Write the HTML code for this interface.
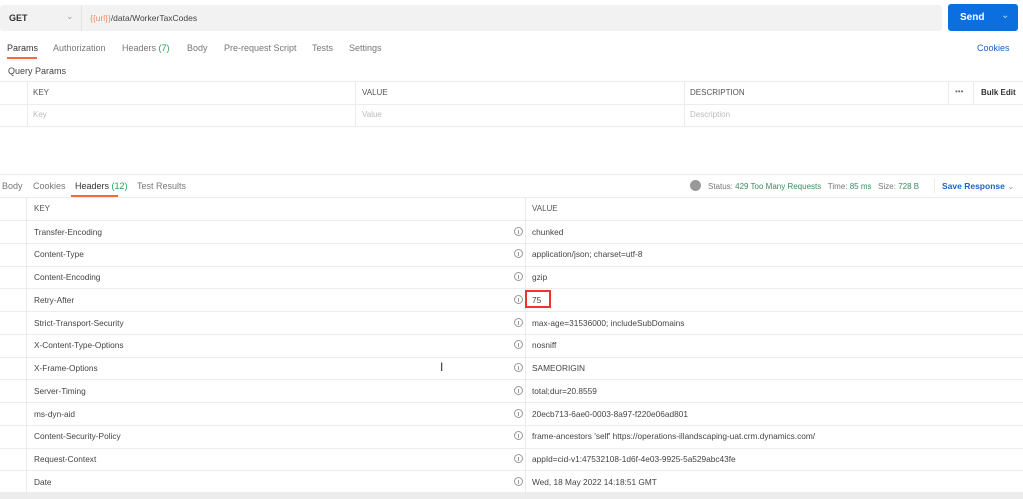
<!DOCTYPE html>
<html><head><meta charset="utf-8"><style>
*{margin:0;padding:0;box-sizing:border-box}
body{width:1023px;height:499px;overflow:hidden;background:#fff;font-family:"Liberation Sans",sans-serif;font-size:9px;color:#333;position:relative}
.a{position:absolute;white-space:nowrap}
.hl{position:absolute;height:1px;background:#ececec}
.vl{position:absolute;width:1px;background:#ececec}
.g{color:#777}
.i{position:absolute;width:9px;height:9px;border:1px solid #999;border-radius:50%}
.i:after{content:"";position:absolute;left:3px;top:2px;width:1px;height:4px;background:#999}
</style></head><body>
<div class="a" style="left:0;top:5px;width:942px;height:26px;background:#f2f2f2;border-radius:3px"></div>
<div class="vl" style="left:81px;top:5px;height:26px;background:#e2e2e2"></div>
<div class="a" style="left:9px;top:13px;font-weight:bold;font-size:9px;color:#333">GET</div>
<div class="a" style="left:66px;top:11px;color:#999;font-size:9px">⌄</div>
<div class="a" style="left:90px;top:13px;font-size:8.5px;color:#444"><span style="color:#f08a60">{{url}}</span>/data/WorkerTaxCodes</div>
<div class="a" style="left:948px;top:4px;width:70px;height:27px;background:#0c6fe0;border-radius:3px"></div>
<div class="a" style="left:960px;top:12px;color:#fff;font-weight:bold;font-size:10px">Send</div>
<div class="a" style="left:1001px;top:10px;color:#b8d6ff;font-size:10px">⌄</div>
<div class="a g" style="left:7px;top:43px;color:#333">Params</div>
<div class="a" style="left:7px;top:57px;width:30px;height:2px;background:#f26b3a"></div>
<div class="a g" style="left:53px;top:43px">Authorization</div>
<div class="a g" style="left:122px;top:43px">Headers <span style="color:#2a9d5a">(7)</span></div>
<div class="a g" style="left:187px;top:43px">Body</div>
<div class="a g" style="left:224px;top:43px">Pre-request Script</div>
<div class="a g" style="left:312px;top:43px">Tests</div>
<div class="a g" style="left:349px;top:43px">Settings</div>
<div class="a" style="left:977px;top:43px;color:#1a63c7">Cookies</div>
<div class="a" style="left:8px;top:66px;color:#444">Query Params</div>
<div class="hl" style="left:0;top:81px;width:1023px"></div>
<div class="hl" style="left:0;top:104px;width:1023px"></div>
<div class="hl" style="left:0;top:126px;width:1023px"></div>
<div class="vl" style="left:27px;top:81px;height:45px"></div>
<div class="vl" style="left:355px;top:81px;height:45px"></div>
<div class="vl" style="left:684px;top:81px;height:45px"></div>
<div class="vl" style="left:948px;top:81px;height:23px"></div>
<div class="vl" style="left:973px;top:81px;height:23px"></div>
<div class="a" style="left:33px;top:88px;color:#555;font-size:8px">KEY</div>
<div class="a" style="left:362px;top:88px;color:#555;font-size:8px">VALUE</div>
<div class="a" style="left:690px;top:88px;color:#555;font-size:8px">DESCRIPTION</div>
<div class="a" style="left:955px;top:87px;color:#777;font-size:8px">•••</div>
<div class="a" style="left:981px;top:88px;color:#333;font-weight:bold;font-size:8px">Bulk Edit</div>
<div class="a" style="left:33px;top:110px;color:#bbb;font-size:8px">Key</div>
<div class="a" style="left:362px;top:110px;color:#bbb;font-size:8px">Value</div>
<div class="a" style="left:690px;top:110px;color:#bbb;font-size:8px">Description</div>
<div class="hl" style="left:0;top:174px;width:1023px"></div>
<div class="a g" style="left:2px;top:181px">Body</div>
<div class="a g" style="left:33px;top:181px">Cookies</div>
<div class="a g" style="left:75px;top:181px;color:#333">Headers <span style="color:#2a9d5a">(12)</span></div>
<div class="a" style="left:71px;top:195px;width:47px;height:2px;background:#f26b3a"></div>
<div class="a g" style="left:137px;top:181px">Test Results</div>
<div class="a" style="left:690px;top:180px;width:11px;height:11px;border-radius:50%;background:#999"></div>
<div class="a g" style="left:708px;top:182px;font-size:8px">Status: <span style="color:#3a8a60">429 Too Many Requests</span> &nbsp; Time: <span style="color:#3a8a60">85 ms</span> &nbsp; Size: <span style="color:#3a8a60">728 B</span></div>
<div class="vl" style="left:934px;top:178px;height:15px"></div>
<div class="a" style="left:942px;top:181px;color:#1a63c7;font-weight:bold;font-size:8.5px">Save Response <span style="color:#999;font-weight:normal">⌄</span></div>
<div class="hl" style="left:0;top:197px;width:1023px"></div>
<div class="a" style="left:34px;top:204px;color:#555;font-size:8px">KEY</div>
<div class="a" style="left:532px;top:204px;color:#555;font-size:8px">VALUE</div>
<div class="vl" style="left:26px;top:197px;height:295px"></div>
<div class="vl" style="left:525px;top:197px;height:295px"></div>
<div id="rows"></div>
<div class="a" style="left:0;top:492px;width:1023px;height:7px;background:#ececec"></div>
<div class="a" style="left:525px;top:290px;width:26px;height:18px;border:2px solid #e33"></div>
<div class="a" style="left:440px;top:360px;font-size:12px;color:#333">I</div>
<script>
var d=[["Transfer-Encoding","chunked"],["Content-Type","application/json; charset=utf-8"],["Content-Encoding","gzip"],["Retry-After","75"],["Strict-Transport-Security","max-age=31536000; includeSubDomains"],["X-Content-Type-Options","nosniff"],["X-Frame-Options","SAMEORIGIN"],["Server-Timing","total;dur=20.8559"],["ms-dyn-aid","20ecb713-6ae0-0003-8a97-f220e06ad801"],["Content-Security-Policy","frame-ancestors 'self' https://operations-illandscaping-uat.crm.dynamics.com/"],["Request-Context","appId=cid-v1:47532108-1d6f-4e03-9925-5a529abc43fe"],["Date","Wed, 18 May 2022 14:18:51 GMT"]];
var h="";for(var k=0;k<d.length;k++){var y=220+k*22.75;
h+='<div class="hl" style="left:0;top:'+y+'px;width:1023px"></div>';
h+='<div class="a" style="left:34px;top:'+(y+6.5)+'px;font-size:8.3px;color:#444">'+d[k][0]+'</div>';
h+='<div class="i" style="left:514px;top:'+(y+6.5)+'px"></div>';
h+='<div class="a" style="left:532px;top:'+(y+6.5)+'px;font-size:8.3px;color:#444">'+d[k][1]+'</div>';}
document.getElementById("rows").innerHTML=h;
</script>
</body></html>
